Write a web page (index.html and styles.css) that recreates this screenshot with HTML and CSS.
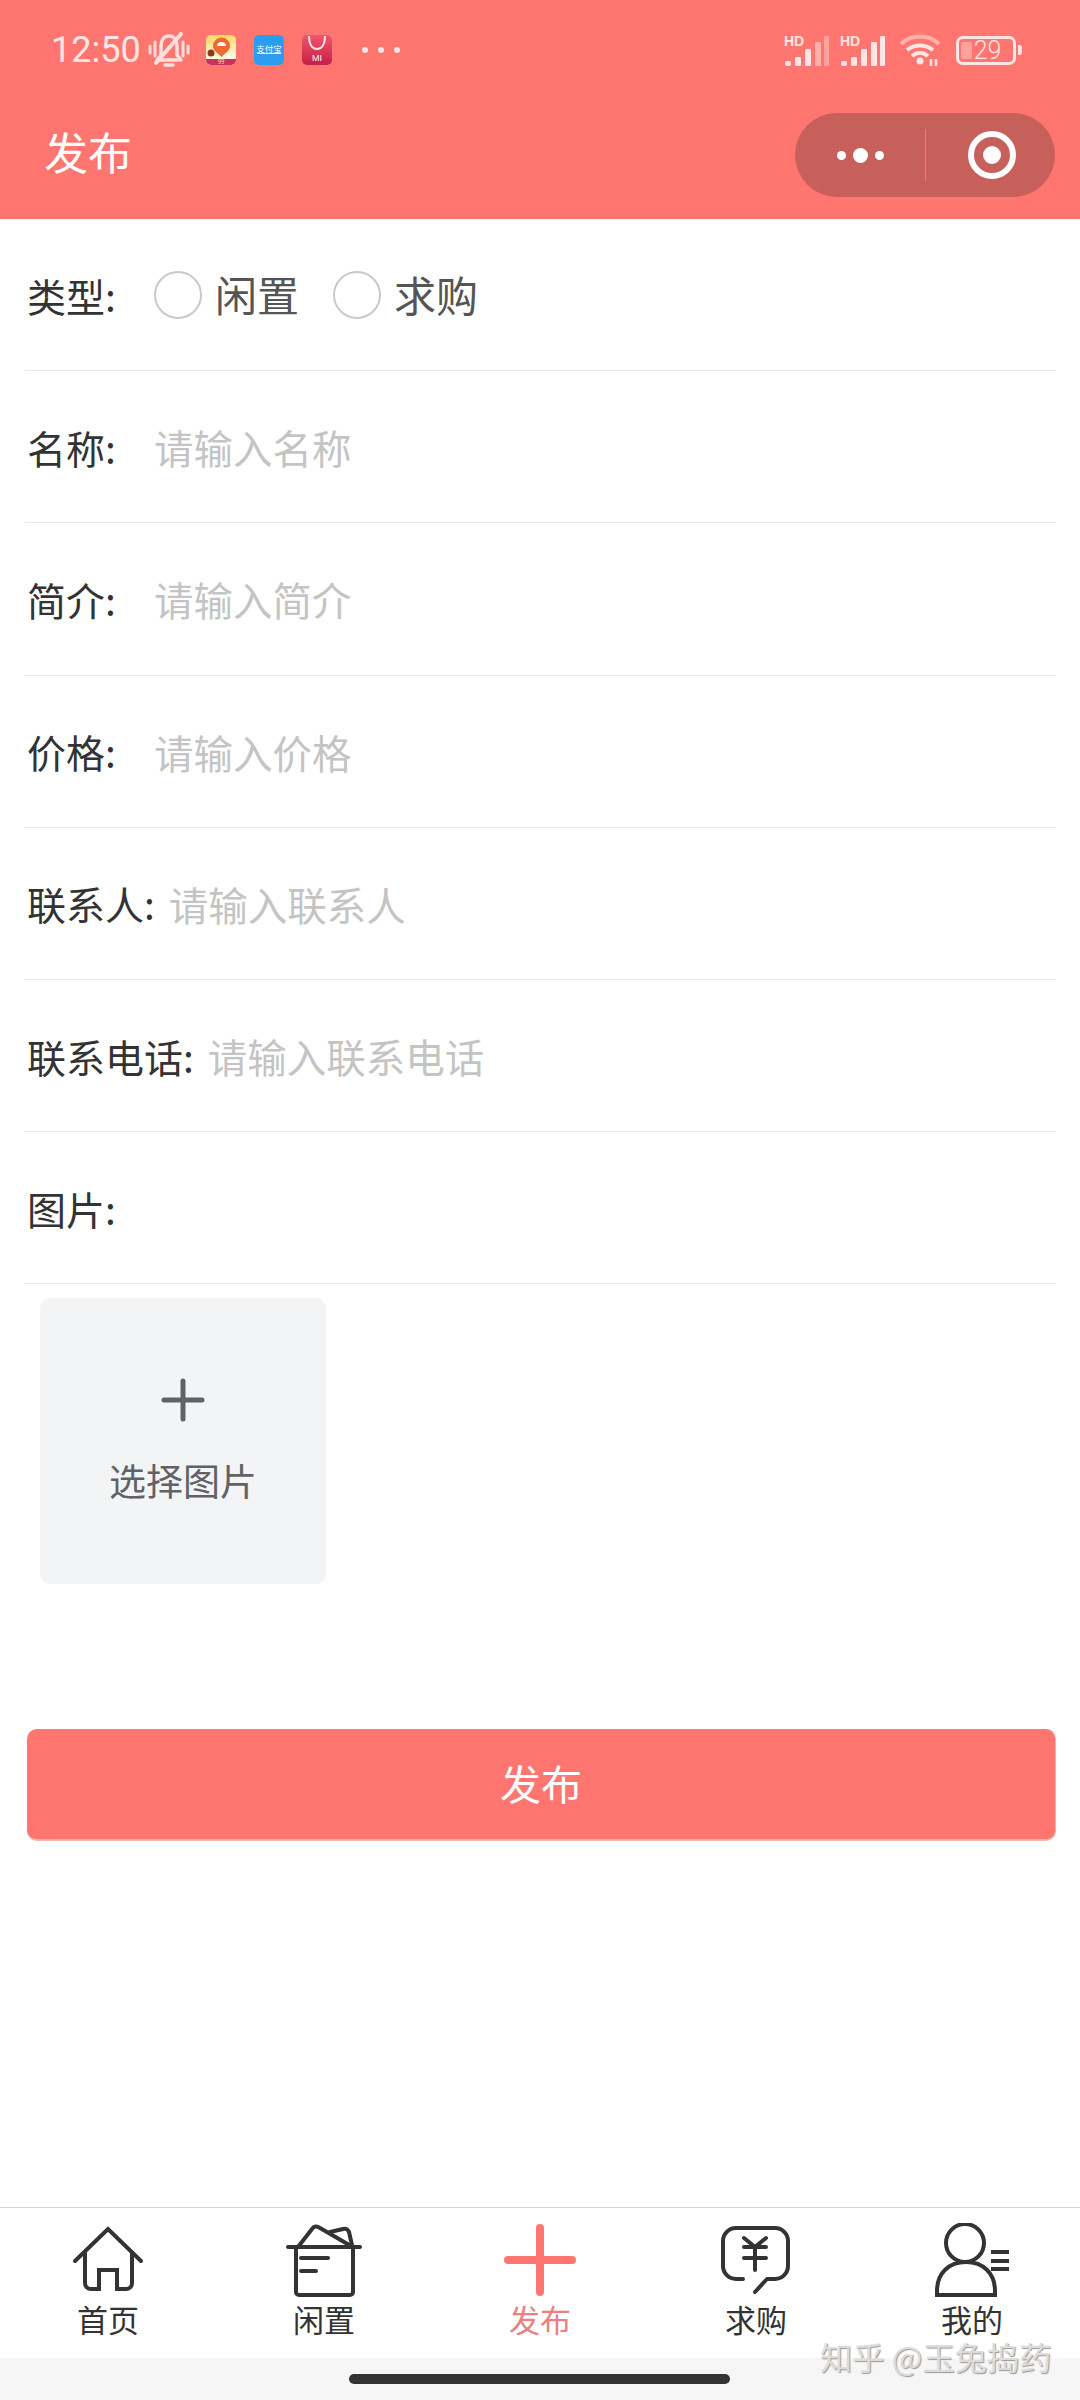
FILE: index.html
```html
<!DOCTYPE html>
<html lang="zh-CN">
  <head>
    <meta charset="UTF-8" />
    <meta name="viewport" content="width=device-width, initial-scale=1.0" />
    <title>发布</title>
    <link rel="stylesheet" href="styles.css">
  </head>
  <body>
    <div class="page">
      <header class="top">
        <div class="status-bar">
          <div class="status-left">
            <span class="time">12:50</span>
            <svg class="ico-mute" width="42" height="36" viewBox="0 0 42 36" fill="none" stroke="#ffdedb" stroke-width="3.5" stroke-linecap="round" stroke-linejoin="round">
              <path d="M13 22V14C13 8 16 4 21 4s8 4 8 10v9l4 5H9l4-5" />
              <path d="M17 33h8" stroke-width="3.5" />
              <path d="M8 31L33 2" stroke-width="4" />
              <path d="M2 14v7M7 10v14M35 10v14M40 14v7" stroke-width="3" />
            </svg>
            <div class="apps">
              <svg class="app" width="30" height="30" viewBox="0 0 30 30">
                <defs>
                  <linearGradient id="appBg" x1="0" y1="0" x2="0" y2="1">
                    <stop offset="0" stop-color="#ffd75e" />
                    <stop offset="0.7" stop-color="#fff8dc" />
                  </linearGradient>
                </defs>
                <rect width="30" height="30" rx="5" fill="url(#appBg)" />
                <path d="M0 24h30v1a5 5 0 0 1-5 5H5a5 5 0 0 1-5-5z" fill="#c8325e" />
                <path d="M7 11a8.500 8.500 0 0 1 17 0c0 5-5 7-8.500 11C12 18 7 16 7 11z" fill="#ee6a2e" />
                <path d="M11 11c0-3 2-4 4.500-4s4.500 1 4.500 4z" fill="#fff" />
                <circle cx="5" cy="18" r="3.500" fill="#8e3a1e" />
                <text class="app-99" x="15" y="29">99</text>
              </svg>
              <svg class="app" width="30" height="30" viewBox="0 0 30 30">
                <rect width="30" height="30" rx="5" fill="#2b9cf0" />
                <text class="app-ali" x="15" y="17">支付宝</text>
                <path d="M3 18.500h24" stroke="#dff1ff" stroke-width="1" />
              </svg>
              <svg class="app" width="30" height="30" viewBox="0 0 30 30">
                <defs>
                  <linearGradient id="miBag" x1="0" y1="0" x2="0" y2="1">
                    <stop offset="0" stop-color="#f0566c" />
                    <stop offset="1" stop-color="#c81e44" />
                  </linearGradient>
                </defs>
                <rect width="30" height="30" rx="5" fill="url(#miBag)" />
                <path d="M7 1c0 8 3 13 8 13s8-5 8-13" fill="none" stroke="#ffe6ea" stroke-width="2" />
                <text class="app-mi" x="15" y="26">MI</text>
              </svg>
            </div>
            <div class="more-dots"><i></i><i></i><i></i></div>
          </div>
          <div class="status-right">
            <svg class="sig" width="46" height="32" viewBox="0 0 46 32">
              <text class="hd" x="0" y="12">HD</text>
              <rect x="1" y="27" width="6" height="5" rx="2" fill="#ffe6e4" />
              <rect x="11" y="23" width="6" height="9" rx="1" fill="#ffe6e4" />
              <rect x="21" y="15" width="6" height="17" rx="1" fill="#ffe6e4" />
              <rect x="31" y="8" width="6" height="24" rx="1" fill="#ffb0ab" />
              <rect x="40" y="2" width="5" height="30" rx="1" fill="#ffa19c" />
            </svg>
            <svg class="sig" width="46" height="32" viewBox="0 0 46 32">
              <text class="hd" x="0" y="12">HD</text>
              <rect x="1" y="27" width="6" height="5" rx="2" fill="#ffe6e4" />
              <rect x="11" y="23" width="6" height="9" rx="1" fill="#ffe6e4" />
              <rect x="21" y="15" width="6" height="17" rx="1" fill="#ffe6e4" />
              <rect x="31" y="8" width="6" height="24" rx="1" fill="#ffe6e4" />
              <rect x="40" y="2" width="5" height="30" rx="1" fill="#ffe6e4" />
            </svg>
            <svg class="wifi" width="42" height="34" viewBox="0 0 42 34" fill="none" stroke-width="4">
              <path d="M2 11C12 1 30 1 40 11" stroke="#ffb0ab" />
              <path d="M8 17c8-6 18-6 26 0" stroke="#ffe6e4" />
              <path d="M13 23c5-4 11-4 16 0" stroke="#ffe6e4" />
              <circle cx="21" cy="28" r="3.500" fill="#ffe6e4" stroke="none" />
              <path d="M32 33v-7M37 33v-7" stroke="#ffe6e4" stroke-width="2.500" />
            </svg>
            <div class="battery">
              <div class="battery-body">
                <div class="battery-fill"></div>
                <span class="battery-num">29</span>
              </div>
              <div class="battery-nub"></div>
            </div>
          </div>
        </div>
        <div class="nav">
          <div class="nav-title">发布</div>
          <div class="capsule">
            <div class="capsule-menu"><i></i><i class="big"></i><i></i></div>
            <div class="capsule-line"></div>
            <div class="capsule-close"><div class="target"></div></div>
          </div>
        </div>
      </header>

      <form class="publish">
        <div class="row">
          <label class="row-label">类型:</label>
          <div class="radio-group">
            <span class="radio"></span><span class="radio-text">闲置</span>
            <span class="radio"></span><span class="radio-text">求购</span>
          </div>
        </div>
        <div class="row">
          <label class="row-label">名称:</label>
          <span class="hint">请输入名称</span>
        </div>
        <div class="row">
          <label class="row-label">简介:</label>
          <span class="hint">请输入简介</span>
        </div>
        <div class="row">
          <label class="row-label">价格:</label>
          <span class="hint">请输入价格</span>
        </div>
        <div class="row">
          <label class="row-label">联系人:</label>
          <span class="hint">请输入联系人</span>
        </div>
        <div class="row">
          <label class="row-label">联系电话:</label>
          <span class="hint">请输入联系电话</span>
        </div>
        <div class="row">
          <label class="row-label">图片:</label>
        </div>
        <div class="upload">
          <svg width="44" height="44" viewBox="0 0 44 44" stroke="#606266" stroke-width="5" stroke-linecap="round">
            <path d="M3 22h38M22 3v38" />
          </svg>
          <span class="upload-text">选择图片</span>
        </div>
        <button type="button" class="btn-submit">发布</button>
      </form>

      <nav class="tabbar">
        <div class="tab">
          <svg width="76" height="76" viewBox="0 0 76 76" fill="none" stroke="#333" stroke-width="4" stroke-linecap="round">
            <path d="M5 38L38 6l33 32" />
            <path d="M62 30v30a6 6 0 0 1-6 6h-9V47H29v19h-8a6 6 0 0 1-6-6V30" />
          </svg>
          <span>首页</span>
        </div>
        <div class="tab">
          <svg width="76" height="76" viewBox="0 0 76 76" fill="none" stroke="#333" stroke-width="4" stroke-linecap="round" stroke-linejoin="round">
            <path d="M2 24h72" />
            <path d="M10 24v45a3 3 0 0 0 3 3h51a3 3 0 0 0 3-3V24" />
            <path d="M12 24L26 6c2-3 5-3 8-1l31 18" />
            <path d="M44 9l13-3c4-1 5 1 6 3l3 13" />
            <path d="M15 35h27M15 48h15" />
          </svg>
          <span>闲置</span>
        </div>
        <div class="tab tab-on">
          <svg width="76" height="76" viewBox="0 0 76 76" stroke="#ff7670" stroke-width="8" stroke-linecap="round">
            <path d="M6 37h64M38 5v64" />
          </svg>
          <span>发布</span>
        </div>
        <div class="tab">
          <svg width="76" height="76" viewBox="0 0 76 76" fill="none" stroke="#333" stroke-width="4" stroke-linecap="round" stroke-linejoin="round">
            <path d="M25 56h-7A13 13 0 0 1 5 43V18A13 13 0 0 1 18 5h39a13 13 0 0 1 13 13v25a13 13 0 0 1-13 13h-8L37 69" />
            <path d="M26 15l11 9 11-9M26 24h22M26 35h22M37 24v23" />
          </svg>
          <span>求购</span>
        </div>
        <div class="tab">
          <svg width="76" height="76" viewBox="0 0 76 76" fill="none" stroke="#333" stroke-width="4">
            <circle cx="31" cy="20" r="19" />
            <path d="M3 72V68C3 50 15 39 32 39S61 50 61 68V72Z" />
            <path d="M57 29h18M57 38h18M57 46h18" />
          </svg>
          <span>我的</span>
        </div>
      </nav>

      <div class="home-strip"><div class="home-bar"></div></div>

      <div class="watermark">知乎 @玉兔捣药</div>
    </div>
  </body>
</html>
```

FILE: styles.css
```css
* {
  box-sizing: border-box;
}

body {
  margin: 0;
  background-color: #fff;
  font-family: "Noto Sans CJK SC", "Noto Sans", sans-serif;
}

.page {
  position: relative;
  display: flex;
  flex-direction: column;
  width: 1080px;
  height: 2400px;
  overflow: hidden;
}

/* 顶部 */
.top {
  height: 219px;
  background-color: #ff7670;
}

.status-bar {
  display: flex;
  justify-content: space-between;
  align-items: center;
  height: 100px;
  padding: 0 58px 0 51px;
}

.status-left,
.status-right,
.apps {
  display: flex;
  align-items: center;
}

.time {
  width: 97px;
  font-family: Roboto, sans-serif;
  font-size: 36px;
  color: #ffe6e4;
}

.apps {
  gap: 18px;
  margin-left: 16px;
}

.app-99,
.app-ali,
.app-mi {
  text-anchor: middle;
  fill: #fff;
}

.app-99 {
  font-size: 6px;
  fill: #ffe27a;
}

.app-ali {
  font-size: 8.500px;
}

.app-mi {
  font-family: "Liberation Sans", sans-serif;
  font-size: 9px;
}

.more-dots {
  display: flex;
  gap: 10px;
  margin-left: 30px;
}

.more-dots i {
  width: 6px;
  height: 6px;
  border-radius: 50%;
  background-color: #ffe6e4;
}

.status-right {
  gap: 10px;
}

.hd {
  font-family: "Liberation Sans", sans-serif;
  font-size: 14px;
  font-weight: bold;
  fill: #ffe6e4;
}

.wifi {
  margin-left: 3px;
}

.battery {
  display: flex;
  align-items: center;
  margin-left: 5px;
}

.battery-body {
  position: relative;
  display: flex;
  justify-content: center;
  align-items: center;
  width: 60px;
  height: 29px;
  border: 3px solid #ffe6e4;
  border-radius: 7px;
}

.battery-fill {
  position: absolute;
  top: 3px;
  bottom: 3px;
  left: 2px;
  width: 11px;
  border-radius: 2px;
  background-color: #ffa19c;
}

.battery-num {
  position: relative;
  margin-left: 3px;
  font-family: Roboto, sans-serif;
  font-size: 25px;
  font-weight: 300;
  line-height: 1;
  color: #ffe6e4;
}

.battery-nub {
  width: 4px;
  height: 10px;
  margin-left: 2px;
  border-radius: 0 3px 3px 0;
  background-color: #ffe6e4;
}

.nav {
  display: flex;
  justify-content: space-between;
  align-items: center;
  height: 110px;
  padding: 0 25px 0 44px;
}

.nav-title {
  padding-bottom: 8px;
  font-size: 44px;
  color: #fff;
}

.capsule {
  display: flex;
  align-items: center;
  width: 260px;
  height: 84px;
  border-radius: 42px;
  background-color: #c75f5b;
}

.capsule-menu {
  display: flex;
  justify-content: center;
  align-items: center;
  gap: 7px;
  width: 130px;
}

.capsule-menu i {
  width: 9px;
  height: 9px;
  border-radius: 50%;
  background-color: #fff;
}

.capsule-menu .big {
  width: 15px;
  height: 15px;
}

.capsule-line {
  width: 1px;
  height: 52px;
  background-color: #da8581;
}

.capsule-close {
  display: flex;
  justify-content: center;
  flex: 1;
  padding-left: 2px;
}

.target {
  position: relative;
  width: 48px;
  height: 48px;
  border: 6px solid #fff;
  border-radius: 50%;
}

.target::after {
  content: "";
  position: absolute;
  top: 9px;
  left: 9px;
  width: 18px;
  height: 18px;
  border-radius: 50%;
  background-color: #fff;
}

/* 表单 */
.publish {
  display: flex;
  flex-direction: column;
  padding: 0 24px 0 25px;
}

.row {
  display: flex;
  align-items: center;
  height: 152.200px;
  padding-left: 2px;
  border-bottom: 1px solid #e9e9e9;
  font-size: 39px;
}

.row-label {
  min-width: 113px;
  margin-right: 14px;
  color: #333;
}

.radio-group {
  display: flex;
  align-items: center;
}

.radio {
  width: 48px;
  height: 48px;
  border: 2px solid #c9c9c9;
  border-radius: 50%;
}

.radio-text {
  margin: 0 34px 0 13px;
  padding-bottom: 2px;
  font-size: 42px;
  color: #555;
}

.hint {
  font-size: 39.500px;
  color: #c4c4c4;
}

.upload {
  display: flex;
  flex-direction: column;
  align-items: center;
  width: 286px;
  height: 286px;
  margin: 14px 0 0 15px;
  padding-top: 80px;
  border-radius: 10px;
  background-color: #f3f4f6;
}

.upload-text {
  margin-top: 33px;
  font-size: 37px;
  line-height: 50px;
  color: #606266;
}

.btn-submit {
  width: 1029px;
  height: 112px;
  margin: 145px 0 0 2px;
  padding: 0 0 5px;
  border: none;
  border-top: 1px solid #e8817b;
  border-right: 1px solid #f6b3af;
  border-bottom: 2px solid #f6b3af;
  border-radius: 10px;
  background-color: #ff7670;
  font-family: inherit;
  font-size: 41px;
  color: #fff;
}

/* 底部 */
.tabbar {
  display: grid;
  grid-template-columns: repeat(5, 1fr);
  height: 151px;
  margin-top: auto;
  padding-top: 15px;
  border-top: 1px solid #d4d4d4;
  background-color: #fff;
}

.tab {
  display: flex;
  flex-direction: column;
  align-items: center;
  font-size: 31px;
  line-height: 32px;
  color: #333;
}

.tab span {
  margin-top: 4px;
}

.tab-on span {
  color: #ea8080;
}

.home-strip {
  height: 42px;
  padding-top: 16px;
  background-color: #f6f6f6;
}

.home-bar {
  width: 381px;
  height: 10px;
  margin-left: 349px;
  border-radius: 5px;
  background-color: #333;
}

.watermark {
  position: absolute;
  top: 2339px;
  left: 820px;
  font-size: 32.300px;
  line-height: 34px;
  color: #dcdcdc;
  text-shadow: 1px 1px 1px #999;
}
```
